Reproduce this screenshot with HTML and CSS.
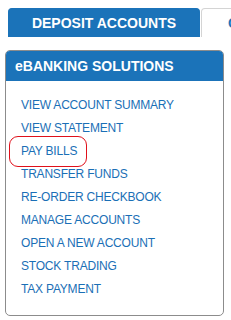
FILE: index.html
```html
<!DOCTYPE html>
<html>
<head>
    <title>eBanking</title>
    <link rel="stylesheet" href="styles.css">
</head>
<body>
    <div class="tabs">
        <div class="tab active">DEPOSIT ACCOUNTS</div>
        <div class="tab">CREDIT CARDS</div>
    </div>

    <div class="panel">
        <div class="panel-header">eBANKING SOLUTIONS</div>
        <ul class="menu">
            <li><a href="#">VIEW ACCOUNT SUMMARY</a></li>
            <li><a href="#">VIEW STATEMENT</a></li>
            <li><a href="#" class="marked">PAY BILLS</a></li>
            <li><a href="#">TRANSFER FUNDS</a></li>
            <li><a href="#">RE-ORDER CHECKBOOK</a></li>
            <li><a href="#">MANAGE ACCOUNTS</a></li>
            <li><a href="#">OPEN A NEW ACCOUNT</a></li>
            <li><a href="#">STOCK TRADING</a></li>
            <li><a href="#">TAX PAYMENT</a></li>
        </ul>
    </div>
</body>
</html>
```

FILE: styles.css
```css
:root {
    --blue: #1b73b9;
    --link-color: #1a6fb6;
    --panel-border: #8c8c8c;
}

body {
    font-family: "Liberation Sans", Arial, sans-serif;
    margin: 0;
    background: #ffffff;
    width: 231px;
    overflow: hidden;
}

.tabs {
    display: flex;
    gap: 1px;
    padding: 8px 0 0 8px;
    white-space: nowrap;
    overflow: hidden;
}

.tab {
    flex-shrink: 0;
    height: 29px;
    line-height: 29px;
    padding: 0 26px;
    font-size: 14px;
    font-weight: bold;
    color: var(--blue);
    border: 1px solid #d4d4d4;
    border-bottom: none;
    border-radius: 4px 4px 0 0;
    box-sizing: border-box;
}

.tab.active {
    width: 192px;
    padding: 0;
    text-align: center;
    background: var(--blue);
    border-color: var(--blue);
    color: #ffffff;
}

.panel {
    margin: 13px 7px 0 5px;
    border: 1px solid var(--panel-border);
    border-radius: 5px;
    overflow: hidden;
}

.panel-header {
    background: var(--blue);
    color: #ffffff;
    font-size: 14px;
    font-weight: bold;
    height: 30px;
    line-height: 30px;
    padding-left: 9px;
}

.menu {
    list-style: none;
    margin: 0;
    padding: 13px 0 14px 15px;
}

.menu li {
    line-height: 23px;
    font-size: 12px;
}

.menu a {
    color: var(--link-color);
    text-decoration: none;
    letter-spacing: -0.2px;
}

.marked {
    position: relative;
}

.marked::after {
    content: "";
    position: absolute;
    left: -12px;
    right: -10px;
    top: -8px;
    bottom: -9px;
    border: 1px solid #e0101a;
    border-radius: 9px;
}
```
